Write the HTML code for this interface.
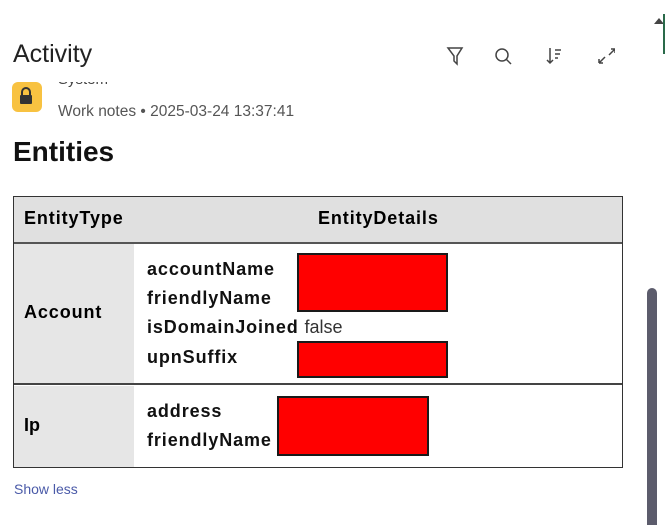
<html><head><style>
body{margin:0;width:672px;height:525px;background:#fff;position:relative;overflow:hidden;font-family:"Liberation Sans",sans-serif}
.a{position:absolute}
.lbl{position:absolute;left:147px;font-weight:bold;font-size:18px;color:#111;line-height:20px;letter-spacing:0.9px}
.red{position:absolute;background:#f00;border:2px solid #1a1a1a;box-sizing:border-box}
</style></head><body>
<div class="a" style="left:13px;top:40px;font-size:25px;color:#222">Activity</div>
<svg class="a" style="left:445px;top:45px" width="170" height="24" fill="none" stroke="#444" stroke-width="1.5">
<path d="M3 3h14l-5 8v8l-3-3v-5z"/>
<circle cx="57" cy="10" r="6"/><path d="M61 14l5 5"/>
<path d="M105 3v15M102 15l3 3 3-3M110 5h6M110 9h5M110 13h3"/>
<path d="M154 18l6-6M154 18v-4M154 18h4M170 4l-6 6M170 4v4M170 4h-4"/>
</svg>
<div class="a" style="left:12px;top:82px;width:30px;height:30px;background:#f8c241;border-radius:6px"></div>
<svg class="a" style="left:17px;top:86px" width="18" height="20"><path d="M5 9V6a4 4 0 0 1 8 0v3" stroke="#333" stroke-width="2" fill="none"/><rect x="3" y="9" width="12" height="9" rx="1" fill="#333"/></svg>
<div class="a" style="left:58px;top:76px;font-size:15px;color:#444;clip-path:inset(6px 0 0 0);height:18px;line-height:8px">System</div>
<div class="a" style="left:58px;top:103px;font-size:15.5px;color:#555">Work notes • 2025-03-24 13:37:41</div>
<div class="a" style="left:13px;top:136px;font-size:28px;font-weight:bold;color:#111">Entities</div>
<div class="a" style="left:13px;top:196px;width:610px;height:272px;border:1px solid #333;box-sizing:border-box"></div>
<div class="a" style="left:14px;top:197px;width:608px;height:45px;background:#e0e0e0;border-bottom:2px solid #555"></div>
<div class="a" style="left:24px;top:208px;font-size:18px;font-weight:bold;letter-spacing:0.9px">EntityType</div>
<div class="a" style="left:318px;top:208px;font-size:18px;font-weight:bold;letter-spacing:0.9px">EntityDetails</div>
<div class="a" style="left:14px;top:244px;width:120px;height:140px;background:#e6e6e6"></div>
<div class="a" style="left:14px;top:383px;width:608px;height:2px;background:#444"></div>
<div class="a" style="left:14px;top:386px;width:120px;height:81px;background:#e6e6e6"></div>
<div class="a" style="left:24px;top:302px;font-size:18px;font-weight:bold;letter-spacing:0.9px">Account</div>
<div class="a" style="left:24px;top:415px;font-size:18px;font-weight:bold">Ip</div>
<div class="lbl" style="top:259px">accountName</div>
<div class="lbl" style="top:288px">friendlyName</div>
<div class="lbl" style="top:317px">isDomainJoined <span style="font-weight:normal;color:#333;letter-spacing:0">false</span></div>
<div class="lbl" style="top:347px">upnSuffix</div>
<div class="lbl" style="top:401px">address</div>
<div class="lbl" style="top:430px">friendlyName</div>
<div class="red" style="left:297px;top:253px;width:151px;height:59px"></div>
<div class="red" style="left:297px;top:341px;width:151px;height:37px"></div>
<div class="red" style="left:277px;top:396px;width:152px;height:60px"></div>
<div class="a" style="left:14px;top:481px;font-size:14px;color:#4a5aa8">Show less</div>
<div class="a" style="left:654px;top:18px;width:0;height:0;border-left:5px solid transparent;border-right:5px solid transparent;border-bottom:6px solid #444"></div>
<div class="a" style="left:663px;top:14px;width:2px;height:40px;background:#2a6a4a"></div>
<div class="a" style="left:647px;top:288px;width:10px;height:237px;background:#5c5c6c;border-radius:5px 5px 0 0"></div>
</body></html>
